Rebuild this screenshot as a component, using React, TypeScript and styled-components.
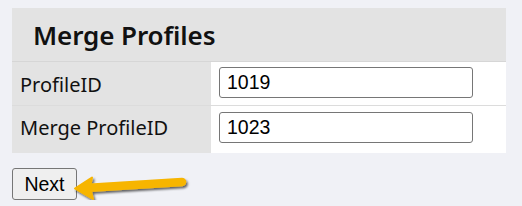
import React from "react";
import styled, { createGlobalStyle } from "styled-components";

const Global = createGlobalStyle`
  html, body { margin: 0; padding: 0; background: #f0f1f6; }
  body { font-family: "Noto Sans", "Open Sans", sans-serif; }
`;

const Page = styled.div`
  padding: 8px 16px 0 12px;
  width: 494px;
`;

const Panel = styled.div`
  width: 494px;
  display: grid;
  grid-template-columns: 199px 1fr;
`;

const Header = styled.div`
  grid-column: 1 / 3;
  background: #e3e3e3;
  height: 53px;
  border-bottom: 1px solid #d6d6d6;
  display: flex;
  align-items: center;
  padding-left: 21px;
  font-size: 26px;
  font-weight: 600;
  color: #111;
  letter-spacing: -0.1px;
`;

type CellProps = { $top: number; $bottom: number; $last?: boolean };

const Label = styled.div<CellProps>`
  background: #e3e3e3;
  padding: ${(p) => p.$top}px 8px ${(p) => p.$bottom}px 8px;
  border-bottom: ${(p) => (p.$last ? "none" : "1px solid #dcdcdc")};
  display: flex;
  align-items: center;
  font-size: 20px;
  line-height: 27px;
  color: #111;
`;

const Value = styled.div<CellProps>`
  background: #fff;
  padding: ${(p) => p.$top}px 8px ${(p) => p.$bottom}px 8px;
  border-bottom: ${(p) => (p.$last ? "none" : "1px solid #dcdcdc")};
  display: flex;
  align-items: center;
`;

const Input = styled.input`
  box-sizing: border-box;
  width: 254px;
  height: 31px;
  border: 1px solid #767676;
  border-radius: 3px;
  padding: 0 7px;
  font-family: "Liberation Sans", Arial, sans-serif;
  font-size: 19.5px;
  color: #000;
  background: #fff;
  outline: none;
`;

const Footer = styled.div`
  display: flex;
  align-items: center;
  margin-top: 15px;
`;

const Button = styled.button`
  box-sizing: border-box;
  width: 65px;
  height: 32px;
  border: 1px solid #767676;
  border-radius: 3px;
  background: #efefef;
  font-family: "Liberation Sans", Arial, sans-serif;
  font-size: 19.5px;
  color: #000;
  padding: 0;
`;

const ArrowSvg = styled.svg`
  display: block;
  margin-left: -3px;
`;

function Arrow() {
  return (
    <ArrowSvg width="120" height="32" viewBox="0 0 120 32">
      <defs>
        <filter id="sh" x="-10%" y="-30%" width="130%" height="170%">
          <feDropShadow dx="1.5" dy="2" stdDeviation="1.2" floodColor="#000" floodOpacity="0.6" />
        </filter>
      </defs>
      <g filter="url(#sh)">
        <path d="M12 20 L108 14" stroke="#f7b500" strokeWidth="8.5" strokeLinecap="round" fill="none" />
        <path d="M1 20.5 L18 9.5 Q15 20 19 31 Z" fill="#f7b500" stroke="#f7b500" strokeWidth="2" strokeLinejoin="round" />
      </g>
    </ArrowSvg>
  );
}

export default function App() {
  return (
    <>
      <Global />
      <Page>
        <Panel>
          <Header>Merge Profiles</Header>
          <Label $top={7} $bottom={5}>ProfileID</Label>
          <Value $top={5} $bottom={7}>
            <Input defaultValue="1019" />
          </Value>
          <Label $top={6} $bottom={10} $last>Merge ProfileID</Label>
          <Value $top={6} $bottom={10} $last>
            <Input defaultValue="1023" />
          </Value>
        </Panel>
        <Footer>
          <Button>Next</Button>
          <Arrow />
        </Footer>
      </Page>
    </>
  );
}
